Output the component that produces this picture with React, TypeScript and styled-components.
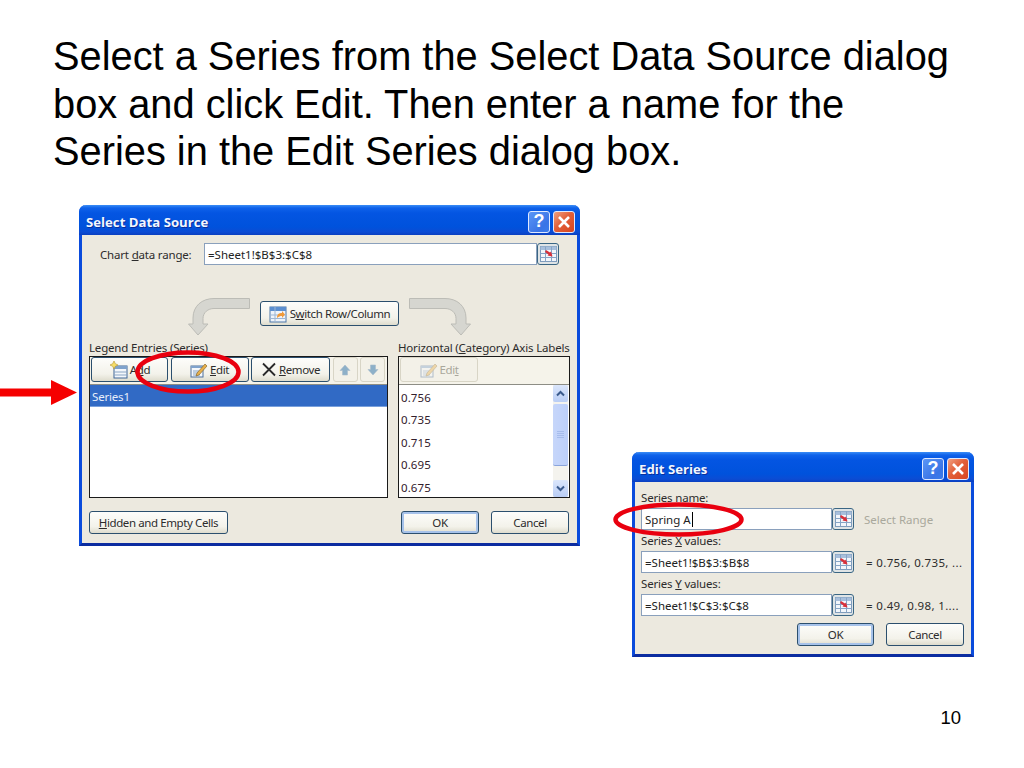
import { FC, ReactNode } from 'react'
import styled, { createGlobalStyle } from 'styled-components'

const GlobalStyle = createGlobalStyle`
  html, body {
    margin: 0;
    padding: 0;
    background: #fff;
  }
`

const Slide = styled.div`
  position: relative;
  width: 1024px;
  height: 768px;
  overflow: hidden;
  background: #fff;
  color: #000;
  font-family: 'Liberation Sans', Arial, sans-serif;
`

const Heading = styled.h1`
  margin: 0;
  padding: 33px 60px 0 53px;
  font-size: 39.8px;
  line-height: 47.6px;
  font-weight: 400;
`

const PageNumber = styled.div`
  position: absolute;
  right: 63px;
  top: 706px;
  font-size: 18.5px;
  line-height: 24px;
`

const Window = styled.div<{ $x: number; $y: number; $w: number; $h: number }>`
  position: absolute;
  left: ${(p) => p.$x}px;
  top: ${(p) => p.$y}px;
  width: ${(p) => p.$w}px;
  height: ${(p) => p.$h}px;
  box-sizing: border-box;
  display: flex;
  flex-direction: column;
  border-radius: 7px 7px 0 0;
  border: 3px solid #0a4bdc;
  border-top: 0;
  border-bottom-color: #0b2ca0;
  background: #ece9df;
  font-family: 'Noto Sans', Tahoma, sans-serif;
  font-size: 11.5px;
  letter-spacing: -0.18px;
  color: #2c2c2c;
`

const TitleBar = styled.div`
  flex: none;
  height: 30px;
  box-sizing: border-box;
  margin: 0 -3px;
  padding: 3px 5px 0 7px;
  display: flex;
  align-items: center;
  justify-content: space-between;
  border-radius: 7px 7px 0 0;
  background: linear-gradient(#3a8df6 0, #0f62ea 3px, #0455e2 8px, #0052dc 22px, #0b4cd4 27px, #0a3fc0 30px);
`

const TitleText = styled.span`
  font-family: 'Open Sans', Tahoma, sans-serif;
  font-size: 13.2px;
  font-weight: 700;
  letter-spacing: 0;
  color: #f2f6ff;
  text-shadow: 1px 1px 0 #0a2f9c;
`

const TitleButtons = styled.div`
  display: flex;
  gap: 3px;
`

const HelpButton = styled.div`
  width: 22px;
  height: 22px;
  box-sizing: border-box;
  display: flex;
  align-items: center;
  justify-content: center;
  border: 1px solid #dfe9ff;
  border-radius: 3px;
  background: linear-gradient(135deg, #5a96f6, #3a74e6 70%, #3a7cec);
  color: #fff;
  font-family: 'Liberation Sans', Arial, sans-serif;
  font-size: 18px;
  font-weight: 700;
`

const CloseButton = styled(HelpButton)`
  background: linear-gradient(135deg, #f0a080, #e2603a 45%, #d8451f);
`

const Client = styled.div`
  flex: 1;
  min-height: 0;
  display: flex;
  flex-direction: column;
`

const Key = styled.span`
  text-decoration: underline;
`

const TextInput = styled.div`
  flex: 1;
  height: 22px;
  box-sizing: border-box;
  padding-left: 3px;
  display: flex;
  align-items: center;
  background: #fff;
  border: 1px solid #8aa0bc;
  color: #222;
  letter-spacing: 0;
  white-space: nowrap;
`

const Caret = styled.span`
  display: inline-block;
  width: 1px;
  height: 15px;
  margin-left: 1px;
  background: #000;
`

const RangeBox = styled.div`
  flex: none;
  width: 22px;
  height: 22px;
  box-sizing: border-box;
  display: flex;
  align-items: center;
  justify-content: center;
  border: 1.5px solid #3a6684;
  border-radius: 3px;
  background: #dfe4e6;
`

const RangeButton: FC = () => (
  <RangeBox>
    <svg width="17" height="16" viewBox="0 0 17 16">
      <rect x=".5" y=".5" width="16" height="15" fill="#f2f6fb" stroke="#7f9cbc" />
      <rect x=".5" y=".5" width="16" height="3.500" fill="#a8bfdc" />
      <path d="M.5 7.500h16M.5 11.500h16M5.500.5v15M11.500.5v15" stroke="#86a4c6" fill="none" />
      <path d="M6 4l4 2.500 1-1 1.500 5-5-1 1-1L5 6z" fill="#d8303a" />
    </svg>
  </RangeBox>
)

const PushButton = styled.div<{ $w: number; $h?: number; $disabled?: boolean; $default?: boolean }>`
  flex: none;
  width: ${(p) => p.$w}px;
  height: ${(p) => p.$h ?? 23}px;
  box-sizing: border-box;
  display: flex;
  align-items: center;
  justify-content: center;
  gap: 2px;
  white-space: nowrap;
  letter-spacing: -0.4px;
  border-radius: 3px;
  border: 1px solid ${(p) => (p.$disabled ? '#d8d5c6' : '#2b4f6e')};
  background: ${(p) =>
    p.$disabled ? '#f3f1e8' : 'linear-gradient(#fdfdfb, #f3f2ea 70%, #dedccd)'};
  color: ${(p) => (p.$disabled ? '#a9a79b' : '#2c2c2c')};
  box-shadow: ${(p) => (p.$default ? 'inset 0 0 0 2px #a6c2ea' : 'none')};
`

const SwitchButton = styled(PushButton)`
  margin-top: 3px;
  gap: 3px;
`

const EditIcon: FC<{ $faded?: boolean }> = ({ $faded }) => (
  <svg width="18" height="16" viewBox="0 0 18 16" opacity={$faded ? 0.4 : 1}>
    <rect x="1" y="4" width="12" height="11" fill="#f4f7fb" stroke="#4d6f9a" />
    <path d="M1 4h12v2H1z" fill="#7fa2cc" />
    <path d="M3 9h6M3 11h5M3 13h7" stroke="#8aa5c4" />
    <path d="M7 11l-1 3 3-1 8-9-2-2z" fill="#e8b04a" stroke="#7a5a20" strokeWidth=".6" />
  </svg>
)

const AddIcon: FC = () => (
  <svg width="19" height="18" viewBox="0 0 19 18">
    <rect x="5" y="5" width="13" height="12" fill="#f4f7fb" stroke="#3f6596" />
    <path d="M5 5h13v3H5z" fill="#7fa2cc" />
    <path d="M5 11h13M5 14h13" stroke="#8aa5c4" />
    <path d="M5 0l1.300 2.700L9 4 6.300 5.300 5 8 3.700 5.300 1 4l2.700-1.300z" fill="#f6de6a" stroke="#b5962a" strokeWidth=".6" />
  </svg>
)

const RemoveIcon: FC = () => (
  <svg width="16" height="15" viewBox="0 0 16 15">
    <path d="M2 1.500l12 12M14 1.500l-12 12" stroke="#2a2a2a" strokeWidth="1.800" fill="none" />
  </svg>
)

const SwitchIcon: FC = () => (
  <svg width="18" height="18" viewBox="0 0 18 18">
    <rect x="1" y="2" width="16" height="15" fill="#eef3fa" stroke="#4d76a8" />
    <path d="M1 2h16v4H1z" fill="#5c8fd0" />
    <path d="M1 10h16M1 13.500h16M6 2v15" stroke="#9db6d4" />
    <path d="M8 13c0-4 2-5 5-5V6l3 3.500-3 3.500V11c-2 0-3 .5-5 2z" fill="#ef9a3a" />
  </svg>
)

const FlipSvg = styled.svg<{ $flip?: boolean }>`
  flex: none;
  transform: ${(p) => (p.$flip ? 'scaleX(-1)' : 'none')};
`

const SwapArrow: FC<{ $flip?: boolean }> = ({ $flip }) => (
  <FlipSvg $flip={$flip} width="62" height="38" viewBox="0 0 62 38">
    <path
      d="M61.500 .5v10H26c-6 0-11 4-11 10v5.500h5L10 37 .5 26H5v-6C5 8 14 .5 26 .5z"
      fill="#d6d6d0"
      stroke="#bcbcb6"
    />
  </FlipSvg>
)

const VFlipSvg = styled.svg<{ $down?: boolean }>`
  transform: ${(p) => (p.$down ? 'scaleY(-1)' : 'none')};
`

const ArrowBtnIcon: FC<{ $down?: boolean }> = ({ $down }) => (
  <VFlipSvg $down={$down} width="14" height="14" viewBox="0 0 14 14">
    <path d="M7 2l5 5.500H9.500V12h-5V7.500H2z" fill="#8db0c8" stroke="#a9bccb" strokeWidth=".6" />
  </VFlipSvg>
)

const ChartRow = styled.div`
  margin-top: 8px;
  padding: 0 18px;
  display: flex;
  align-items: center;
`

const ChartLabel = styled.span`
  flex: none;
  width: 104px;
`

const SwitchRow = styled.div`
  margin-top: 33px;
  height: 38px;
  display: flex;
  justify-content: center;
  gap: 10px;
`

const ListColumns = styled.div`
  padding: 5px 7px 0;
  display: grid;
  grid-template-columns: 299px 172px;
  column-gap: 10px;
`

const ListColumn = styled.div`
  display: flex;
  flex-direction: column;
  min-width: 0;
`

const ListLabel = styled.div`
  height: 15px;
  line-height: 13px;
  white-space: nowrap;
`

const ListBox = styled.div`
  height: 142px;
  box-sizing: border-box;
  display: flex;
  flex-direction: column;
  background: #fff;
  border: 1.5px solid #1a1a1a;
`

const ListToolbar = styled.div`
  flex: none;
  height: 28px;
  box-sizing: border-box;
  padding: 0 1px;
  display: flex;
  gap: 2.5px;
  background: #f5f3ea;
  border-bottom: 1px solid #8d8d85;
`

const SelectedRow = styled.div`
  height: 22px;
  box-sizing: border-box;
  padding: 1px 0 0 2px;
  display: flex;
  align-items: center;
  background: #316ac5;
  color: #e8eefa;
  border-bottom: 1px solid #79a0dc;
`

const ValuesArea = styled.div`
  flex: 1;
  min-height: 0;
  display: flex;
`

const Values = styled.div`
  flex: 1;
  padding: 1px 0 0 2px;
  display: flex;
  flex-direction: column;
`

const ValueRow = styled.div`
  flex: none;
  height: 22.5px;
  display: flex;
  align-items: center;
  letter-spacing: 0.1px;
  color: #33202c;
`

const Scrollbar = styled.div`
  flex: none;
  width: 15px;
  margin-right: 1px;
  display: flex;
  flex-direction: column;
  background: #f4f3ee;
`

const ScrollArrow = styled.div`
  flex: none;
  height: 17px;
  display: flex;
  align-items: center;
  justify-content: center;
  border-radius: 2px;
  background: linear-gradient(#dbe6fb, #b9cdf5);
`

const ScrollThumb = styled.div`
  flex: none;
  height: 61px;
  margin-top: 2px;
  display: flex;
  align-items: center;
  justify-content: center;
  border-radius: 2px;
  border-bottom: 1px solid #8aa4dc;
  background: linear-gradient(90deg, #c6d6fa, #bccffa);
`

const ThumbGrip = styled.div`
  width: 7px;
  height: 7px;
  background: repeating-linear-gradient(#a6bcec 0 1px, transparent 1px 2px);
`

const ScrollChevron: FC<{ $down?: boolean }> = ({ $down }) => (
  <VFlipSvg $down={$down} width="9" height="7" viewBox="0 0 9 7">
    <path d="M1 5.500L4.500 2 8 5.500" stroke="#3a5a8c" strokeWidth="2" fill="none" />
  </VFlipSvg>
)

const FooterRow = styled.div`
  margin-top: 13px;
  padding: 0 8px 0 7px;
  display: flex;
  align-items: center;
`

const FooterSpacer = styled.div`
  flex: 1;
`

const FooterGap = styled.div`
  width: 12px;
`

const EditBody = styled.div`
  padding: 8px 6px 0;
  display: flex;
  flex-direction: column;
`

const FieldLabel = styled.div`
  height: 18px;
  line-height: 16px;
`

const FieldRow = styled.div`
  height: 22px;
  margin-bottom: 3px;
  display: grid;
  grid-template-columns: 213px 1fr;
  align-items: center;
`

const FieldControls = styled.div`
  display: flex;
`

const FieldNote = styled.span<{ $muted?: boolean }>`
  padding-left: ${(p) => (p.$muted ? 10 : 12)}px;
  white-space: nowrap;
  letter-spacing: ${(p) => (p.$muted ? 0 : 0.35)}px;
  color: ${(p) => (p.$muted ? '#a9a89c' : '#2c2c2c')};
`

const EditFooter = styled.div`
  margin-top: 4px;
  padding-right: 1px;
  display: flex;
  justify-content: flex-end;
  gap: 12px;
`

const OverlaySvg = styled.svg<{ $x: number; $y: number }>`
  position: absolute;
  left: ${(p) => p.$x}px;
  top: ${(p) => p.$y}px;
  overflow: visible;
`

const RedOval: FC<{ x: number; y: number; w: number; h: number }> = ({ x, y, w, h }) => (
  <OverlaySvg $x={x} $y={y} width={w} height={h} viewBox={`0 0 ${w} ${h}`}>
    <ellipse cx={w / 2} cy={h / 2} rx={w / 2 - 2.5} ry={h / 2 - 2.5} fill="none" stroke="#e9000f" strokeWidth="4.500" />
  </OverlaySvg>
)

const Dialog: FC<{
  x: number
  y: number
  w: number
  h: number
  title: string
  children: ReactNode
}> = ({ x, y, w, h, title, children }) => (
  <Window $x={x} $y={y} $w={w} $h={h}>
    <TitleBar>
      <TitleText>{title}</TitleText>
      <TitleButtons>
        <HelpButton>?</HelpButton>
        <CloseButton>
          <svg width="14" height="14" viewBox="0 0 14 14">
            <path d="M2 2l10 10M12 2L2 12" stroke="#fff" strokeWidth="2.6" fill="none" />
          </svg>
        </CloseButton>
      </TitleButtons>
    </TitleBar>
    <Client>{children}</Client>
  </Window>
)

const values = ['0.756', '0.735', '0.715', '0.695', '0.675']

const App: FC = () => (
  <Slide>
    <GlobalStyle />
    <Heading>
      Select a Series from the Select Data Source dialog box and click Edit. Then enter a name for the Series in
      the Edit Series dialog box.
    </Heading>

    <Dialog x={79} y={205} w={501} h={341} title="Select Data Source">
      <ChartRow>
        <ChartLabel>
          Chart <Key>d</Key>ata range:
        </ChartLabel>
        <TextInput>=Sheet1!$B$3:$C$8</TextInput>
        <RangeButton />
      </ChartRow>
      <SwitchRow>
        <SwapArrow />
        <SwitchButton $w={139} $h={25}>
          <SwitchIcon />
          <span>
            S<Key>w</Key>itch Row/Column
          </span>
        </SwitchButton>
        <SwapArrow $flip />
      </SwitchRow>
      <ListColumns>
        <ListColumn>
          <ListLabel>
            Legend Entries (<Key>S</Key>eries)
          </ListLabel>
          <ListBox>
            <ListToolbar>
              <PushButton $w={77} $h={25}>
                <AddIcon />
                <span>
                  A<Key>d</Key>d
                </span>
              </PushButton>
              <PushButton $w={78} $h={25}>
                <EditIcon />
                <span>
                  <Key>E</Key>dit
                </span>
              </PushButton>
              <PushButton $w={79} $h={25}>
                <RemoveIcon />
                <span>
                  <Key>R</Key>emove
                </span>
              </PushButton>
              <PushButton $w={25} $h={25} $disabled>
                <ArrowBtnIcon />
              </PushButton>
              <PushButton $w={25} $h={25} $disabled>
                <ArrowBtnIcon $down />
              </PushButton>
            </ListToolbar>
            <SelectedRow>Series1</SelectedRow>
          </ListBox>
        </ListColumn>
        <ListColumn>
          <ListLabel>
            Horizontal (<Key>C</Key>ategory) Axis Labels
          </ListLabel>
          <ListBox>
            <ListToolbar>
              <PushButton $w={78} $h={25} $disabled>
                <EditIcon $faded />
                <span>
                  Edi<Key>t</Key>
                </span>
              </PushButton>
            </ListToolbar>
            <ValuesArea>
              <Values>
                {values.map((value) => (
                  <ValueRow key={value}>{value}</ValueRow>
                ))}
              </Values>
              <Scrollbar>
                <ScrollArrow>
                  <ScrollChevron />
                </ScrollArrow>
                <ScrollThumb>
                  <ThumbGrip />
                </ScrollThumb>
                <FooterSpacer />
                <ScrollArrow>
                  <ScrollChevron $down />
                </ScrollArrow>
              </Scrollbar>
            </ValuesArea>
          </ListBox>
        </ListColumn>
      </ListColumns>
      <FooterRow>
        <PushButton $w={139}>
          <span>
            <Key>H</Key>idden and Empty Cells
          </span>
        </PushButton>
        <FooterSpacer />
        <PushButton $w={78} $default>
          OK
        </PushButton>
        <FooterGap />
        <PushButton $w={78}>Cancel</PushButton>
      </FooterRow>
    </Dialog>

    <Dialog x={632} y={452} w={342} h={205} title="Edit Series">
      <EditBody>
        <FieldLabel>
          Series <Key>n</Key>ame:
        </FieldLabel>
        <FieldRow>
          <FieldControls>
            <TextInput>
              Spring A<Caret />
            </TextInput>
            <RangeButton />
          </FieldControls>
          <FieldNote $muted>Select Range</FieldNote>
        </FieldRow>
        <FieldLabel>
          Series <Key>X</Key> values:
        </FieldLabel>
        <FieldRow>
          <FieldControls>
            <TextInput>=Sheet1!$B$3:$B$8</TextInput>
            <RangeButton />
          </FieldControls>
          <FieldNote>= 0.756, 0.735, ...</FieldNote>
        </FieldRow>
        <FieldLabel>
          Series <Key>Y</Key> values:
        </FieldLabel>
        <FieldRow>
          <FieldControls>
            <TextInput>=Sheet1!$C$3:$C$8</TextInput>
            <RangeButton />
          </FieldControls>
          <FieldNote>= 0.49, 0.98, 1....</FieldNote>
        </FieldRow>
        <EditFooter>
          <PushButton $w={77} $default>
            OK
          </PushButton>
          <PushButton $w={78}>Cancel</PushButton>
        </EditFooter>
      </EditBody>
    </Dialog>

    <RedOval x={135} y={350} w={106} h={44} />
    <RedOval x={613} y={502} w={131} h={35} />

    <OverlaySvg $x={0} $y={378} width={80} height={30} viewBox="0 0 80 30">
      <path d="M0 10.500h51V2l26 12.500L51 27v-8.500H0z" fill="#f50000" />
    </OverlaySvg>

    <PageNumber>10</PageNumber>
  </Slide>
)

export default App
